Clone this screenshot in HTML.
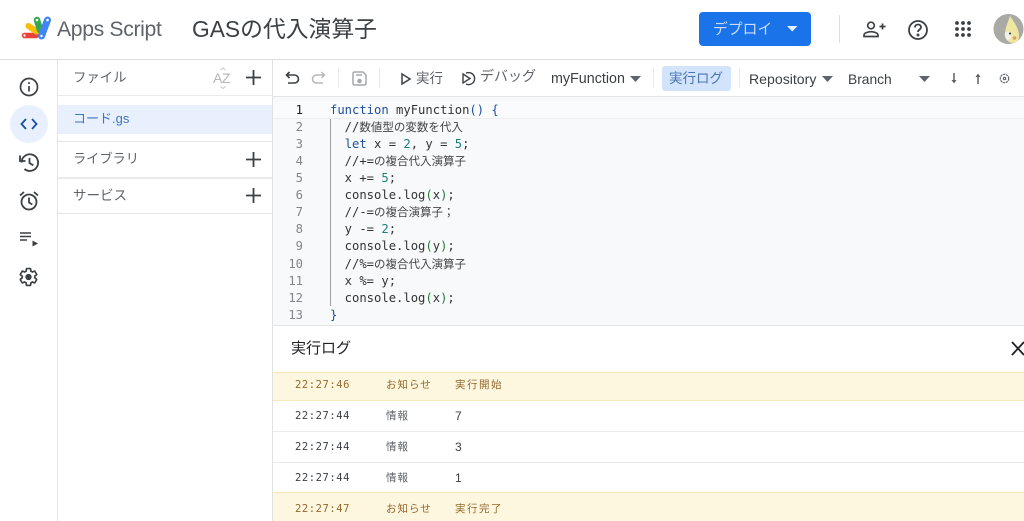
<!DOCTYPE html>
<html lang="ja"><head><meta charset="utf-8"><title>Apps Script</title>
<style>
html,body{margin:0;padding:0;background:#fff;}
body{width:1024px;height:521px;overflow:hidden;position:relative;font-family:"Liberation Sans","Noto Sans CJK JP",sans-serif;color:#3c4043;}
.a{position:absolute;white-space:nowrap;}
.ln{position:absolute;left:272px;width:31px;text-align:right;font:12.2px/17px "DejaVu Sans Mono",monospace;color:#80868b;}
.c{position:absolute;left:330px;font:12.2px/17px "DejaVu Sans Mono","Noto Sans CJK JP",monospace;color:#333;white-space:pre;}
.c i{font-style:normal;font-family:"Noto Sans CJK JP",sans-serif;font-size:11.5px;color:#444;}
.k{color:#1f4e9e}.n{color:#1f7f7f}.p{color:#2a7a3c}
.row{position:absolute;left:272px;width:752px;font:10.5px/14px "DejaVu Sans Mono","Noto Sans CJK JP",monospace;color:#3c4043;}
.row span{position:absolute;top:0;white-space:nowrap;}
.row .t{left:23px;letter-spacing:.55px}
.row .l{left:114px;font-family:"Noto Sans CJK JP",sans-serif;font-size:10.5px;letter-spacing:1px;color:#5f6368}
.row .m{left:183px;font-family:"Noto Sans CJK JP",sans-serif;font-size:10.5px;letter-spacing:1.5px}
.row .d{left:183px;font-family:"Liberation Sans",sans-serif;font-size:12px;}
.y,.y span{color:#96682c!important}
svg{position:absolute;overflow:visible}
.tb{font-size:14px;color:#3c4043;}
.jp{font-family:"Noto Sans CJK JP",sans-serif;}
</style></head><body>

<!-- header -->
<svg style="left:20px;top:15px" width="32" height="27" viewBox="0 0 32 27" fill="none" stroke-linecap="round">
<path d="M4.500 20.500H16" stroke="#ea4335" stroke-width="5.500"/>
<path d="M8.500 11L16.500 16.500" stroke="#fbbc04" stroke-width="6"/>
<path d="M17 5L20 15" stroke="#34a853" stroke-width="6.500"/>
<path d="M27.500 5L21.500 21" stroke="#4285f4" stroke-width="7"/>
<circle cx="17" cy="5" r="1.300" fill="#fff"/><circle cx="27.500" cy="5" r="1.300" fill="#fff"/>
<circle cx="4.500" cy="20.500" r="1.200" fill="#fff"/><circle cx="21.500" cy="21" r="1.200" fill="#fff"/>
</svg>
<div class="a" style="left:57px;top:17px;font-size:21.200px;line-height:26px;color:#5f6368;letter-spacing:-.35px">Apps Script</div>
<div class="a" style="left:192px;top:14px;font-size:22.800px;line-height:30px;color:#3c4043;font-family:'Liberation Sans','Noto Sans CJK JP',sans-serif;">GASの代入演算子</div>

<div class="a" style="left:699px;top:12px;width:112px;height:34px;background:#1a73e8;border-radius:4px"></div>
<div class="a jp" style="left:713px;top:19px;font-size:14.800px;line-height:19px;color:#c9defb;">デプロイ</div>
<svg style="left:787px;top:26px" width="11" height="6"><path d="M0 0H10.500L5.250 5.500Z" fill="#e8f0fe"/></svg>
<div class="a" style="left:839px;top:15px;width:1px;height:28px;background:#dadce0"></div>
<svg style="left:863px;top:21px" width="23" height="17" viewBox="0 0 23 17" fill="none" stroke="#3c4043" stroke-width="1.700">
<circle cx="8" cy="4.500" r="3.300"/><path d="M1 15.500v-1.500c0-2 4-3.300 7-3.300s7 1.300 7 3.300v1.500Z"/><path d="M16.500 5.500h6M19.500 2.500v6"/></svg>
<svg style="left:907px;top:19px" width="22" height="22" viewBox="0 0 22 22" fill="none" stroke="#3c4043" stroke-width="1.800">
<circle cx="11" cy="11" r="9"/><path d="M8 8.500c0-1.800 1.300-3 3-3s3 1.200 3 2.800c0 2.200-3 2.400-3 4.700"/><circle cx="11" cy="16" r=".6"/></svg>
<svg style="left:955px;top:21px" width="16" height="16" fill="#3c4043">
<circle cx="2" cy="2" r="1.900"/><circle cx="8" cy="2" r="1.900"/><circle cx="14" cy="2" r="1.900"/>
<circle cx="2" cy="8" r="1.900"/><circle cx="8" cy="8" r="1.900"/><circle cx="14" cy="8" r="1.900"/>
<circle cx="2" cy="14" r="1.900"/><circle cx="8" cy="14" r="1.900"/><circle cx="14" cy="14" r="1.900"/></svg>
<svg style="left:993px;top:14px" width="31" height="30" viewBox="0 0 31 30">
<circle cx="15.500" cy="15" r="15" fill="#a9a9a6"/>
<path d="M17 2C15 8 12 14 12 20c0 5 3 9 8 9 4 0 6-3 6-7C26 14 21 8 17 2Z" fill="#eee7a0"/>
<path d="M12 19c1-2 5-2 6 0 1 3-1 7-3 7s-4-4-3-7Z" fill="#f3f1e6"/>
<circle cx="17" cy="19.500" r="1" fill="#222"/><circle cx="21.500" cy="24" r="1.800" fill="#dc9a6e"/></svg>
<div class="a" style="left:0;top:59px;width:1024px;height:1px;background:#dadce0"></div>

<!-- left rail -->
<div class="a" style="left:57px;top:60px;width:1px;height:461px;background:#e3e4e6"></div>
<svg style="left:19px;top:77px" width="20" height="20" viewBox="0 0 20 20" fill="none" stroke="#3c4043" stroke-width="1.700">
<circle cx="10" cy="10" r="8.500"/><path d="M10 9v5.500"/><path d="M10 5.200v1.800"/></svg>
<div class="a" style="left:10px;top:105px;width:38px;height:38px;border-radius:50%;background:#e8f0fe"></div>
<svg style="left:20px;top:118px" width="18" height="12" viewBox="0 0 18 12" fill="none" stroke="#174ea6" stroke-width="1.800">
<path d="M6 1L1.500 6 6 11M12 1l4.500 5-4.500 5"/></svg>
<svg style="left:19px;top:153px" width="20" height="19" viewBox="0 0 20 19" fill="none" stroke="#3c4043" stroke-width="1.800">
<path d="M2.500 9.500A8.300 8.300 0 1 1 5.500 16"/><path d="M1 2.500V8h5.500"/><path d="M10.500 5v5l3.800 2.300"/></svg>
<svg style="left:19px;top:191px" width="20" height="20" viewBox="0 0 20 20" fill="none" stroke="#3c4043" stroke-width="1.800">
<circle cx="10" cy="11" r="7.500"/><path d="M10 6.500v5l3.300 2"/><path d="M1 4.500l4-3.500M19 4.500l-4-3.500"/></svg>
<svg style="left:20px;top:232px" width="19" height="15" viewBox="0 0 19 15" fill="none">
<path d="M0 1h11M0 4.500h11M0 8h7" stroke="#3c4043" stroke-width="1.400"/><path d="M12.500 8.500l5.500 3-5.500 3Z" fill="#3c4043"/></svg>
<svg style="left:18px;top:265.500px" width="21" height="22" viewBox="0 0 24 24">
<path fill="none" stroke="#3c4043" stroke-width="1.900" d="M19.140 12.940c.04-.3.06-.61.06-.94 0-.32-.02-.64-.07-.94l2.030-1.580c.18-.14.23-.41.12-.61l-1.920-3.320c-.12-.22-.37-.29-.59-.22l-2.390.96c-.5-.38-1.030-.7-1.620-.94l-.36-2.540c-.04-.24-.24-.41-.48-.41h-3.840c-.24 0-.43.17-.47.41l-.36 2.540c-.59.24-1.130.57-1.620.94l-2.390-.96c-.22-.08-.47 0-.59.22L2.740 8.870c-.12.21-.08.47.12.61l2.030 1.580c-.05.3-.09.63-.09.94s.02.64.07.94l-2.030 1.580c-.18.14-.23.41-.12.61l1.920 3.320c.12.22.37.29.59.22l2.390-.96c.5.38 1.030.7 1.620.94l.36 2.540c.05.24.24.41.48.41h3.840c.24 0 .44-.17.47-.41l.36-2.540c.59-.24 1.130-.56 1.620-.94l2.390.96c.22.08.47 0 .59-.22l1.920-3.320c.12-.22.07-.47-.12-.61l-2.010-1.580z"/><circle cx="12" cy="12" r="3.600" fill="#3c4043"/></svg>

<!-- file panel -->
<div class="a jp" style="left:73px;top:67px;font-size:13.400px;line-height:19px;color:#5f6368;">ファイル</div>
<div class="a" style="left:213px;top:70px;font-size:14px;line-height:16px;color:#b4b6b9;letter-spacing:-.5px">AZ</div>
<svg style="left:219px;top:68px" width="8" height="22"><path d="M1.500 2L4 0 6.500 2M1.500 18.500L4 20.500 6.500 18.500" fill="none" stroke="#c4c6c9" stroke-width="1"/></svg>
<svg style="left:246px;top:70px" width="15" height="15"><path d="M7.500 0v15M0 7.500h15" stroke="#3c4043" stroke-width="1.800"/></svg>
<div class="a" style="left:58px;top:95px;width:214px;height:1px;background:#e8eaed"></div>
<div class="a" style="left:58px;top:105px;width:214px;height:29px;background:#e8f0fe"></div>
<div class="a" style="left:73px;top:110px;font-size:13px;line-height:18px;color:#3f74c4;font-family:'Liberation Sans','Noto Sans CJK JP',sans-serif;">コード.gs</div>
<div class="a" style="left:58px;top:141px;width:214px;height:1px;background:#e3e4e6"></div>
<div class="a jp" style="left:73px;top:148px;font-size:13.200px;line-height:19px;color:#5f6368;">ライブラリ</div>
<svg style="left:246px;top:152px" width="15" height="15"><path d="M7.500 0v15M0 7.500h15" stroke="#3c4043" stroke-width="1.800"/></svg>
<div class="a" style="left:58px;top:177px;width:214px;height:2px;background:#e8eaed"></div>
<div class="a jp" style="left:73px;top:185px;font-size:13.500px;line-height:19px;color:#5f6368;">サービス</div>
<svg style="left:246px;top:188px" width="15" height="15"><path d="M7.500 0v15M0 7.500h15" stroke="#3c4043" stroke-width="1.800"/></svg>
<div class="a" style="left:58px;top:213px;width:214px;height:1px;background:#e3e4e6"></div>
<div class="a" style="left:272px;top:60px;width:1px;height:461px;background:#dfe1e3"></div>

<!-- toolbar -->
<svg style="left:285px;top:71px" width="15" height="14" viewBox="0 0 15 14" fill="none" stroke="#3c4043" stroke-width="1.600">
<path d="M4.500 1L1.500 4l3 3"/><path d="M2 4h7.500a4 4 0 0 1 0 8H3"/></svg>
<svg style="left:311px;top:71px" width="15" height="14" viewBox="0 0 15 14" fill="none" stroke="#b5b7ba" stroke-width="1.500">
<path d="M10.500 1l3 3-3 3"/><path d="M13 4H5.500a4 4 0 0 0 0 8H12"/></svg>
<div class="a" style="left:338px;top:68px;width:1px;height:20px;background:#e8eaed"></div>
<svg style="left:352px;top:71px" width="15" height="15" viewBox="0 0 15 15" fill="none" stroke="#a5a7aa" stroke-width="1.500">
<path d="M1 2.500A1.500 1.500 0 0 1 2.500 1H11l3 3v8.500a1.500 1.500 0 0 1-1.500 1.500h-10A1.500 1.500 0 0 1 1 12.500Z"/><path d="M4 4h6"/><circle cx="7.500" cy="10" r="1.500" fill="#a5a7aa"/></svg>
<div class="a" style="left:379px;top:68px;width:1px;height:20px;background:#e8eaed"></div>
<svg style="left:401px;top:73px" width="10" height="12" fill="none" stroke="#3c4043" stroke-width="1.500"><path d="M1 1l8 5-8 5Z"/></svg>
<div class="a jp" style="left:416px;top:68px;font-size:13.500px;line-height:18px;color:#5f6368;">実行</div>
<svg style="left:461px;top:71px" width="15" height="15" viewBox="0 0 15 15" fill="none" stroke="#3c4043" stroke-width="1.400">
<path d="M5 2.200A6 6 0 1 1 5 13"/><path d="M1 3l7 4.500-7 4.500Z" transform="translate(1 0)"/></svg>
<div class="a jp" style="left:480px;top:67px;font-size:14px;line-height:19px;color:#5f6368;">デバッグ</div>
<div class="a tb" style="left:551px;top:71px;font-size:14.300px;line-height:17px">myFunction</div>
<svg style="left:630px;top:76px" width="12" height="6"><path d="M0 0H11L5.500 6Z" fill="#5f6368"/></svg>
<div class="a" style="left:653px;top:68px;width:1px;height:20px;background:#e8eaed"></div>
<div class="a" style="left:662px;top:66px;width:69px;height:25px;background:#d2e3fc;border-radius:3px"></div>
<div class="a jp" style="left:669px;top:68px;font-size:13.500px;line-height:18px;color:#4a74b0;">実行ログ</div>
<div class="a" style="left:739px;top:68px;width:1px;height:20px;background:#e8eaed"></div>
<div class="a tb" style="left:749px;top:71px;line-height:17px;font-size:14.100px">Repository</div>
<svg style="left:822px;top:76px" width="12" height="6"><path d="M0 0H11L5.500 6Z" fill="#5f6368"/></svg>
<div class="a tb" style="left:848px;top:71px;line-height:17px;font-size:13.800px">Branch</div>
<svg style="left:919px;top:76px" width="12" height="6"><path d="M0 0H11L5.500 6Z" fill="#5f6368"/></svg>
<svg style="left:951px;top:73px" width="6" height="11" fill="none"><path d="M3 0v8" stroke="#5f6368" stroke-width="1.500"/><path d="M.5 7h5L3 10.500Z" fill="#5f6368"/></svg>
<svg style="left:975px;top:73px" width="6" height="11" fill="none"><path d="M3 3v8" stroke="#5f6368" stroke-width="1.500"/><path d="M.5 4h5L3 .5Z" fill="#5f6368"/></svg>
<svg style="left:999px;top:73px" width="11" height="11" fill="none" stroke="#5f6368" stroke-width="1.200"><circle cx="5.500" cy="5.500" r="4.200" stroke-dasharray="2.300 .7"/><circle cx="5.500" cy="5.500" r="1.200"/></svg>

<!-- editor -->
<div class="a" style="left:272px;top:96px;width:752px;height:1px;background:#e3e4e6"></div>
<div class="a" style="left:273px;top:97px;width:751px;height:228px;background:#f8f9fa"></div>
<div class="a" style="left:273px;top:101px;width:751px;height:17px;background:#fafbfc;border-bottom:1px solid #eceef0"></div>
<div class="a" style="left:330px;top:119px;width:1px;height:187px;background:#9aa0a6"></div>

<div class="ln" style="top:102px;color:#202124">1</div>
<div class="ln" style="top:119px">2</div>
<div class="ln" style="top:136px">3</div>
<div class="ln" style="top:153px">4</div>
<div class="ln" style="top:170px">5</div>
<div class="ln" style="top:187px">6</div>
<div class="ln" style="top:204px">7</div>
<div class="ln" style="top:221px">8</div>
<div class="ln" style="top:238px">9</div>
<div class="ln" style="top:255.500px">10</div>
<div class="ln" style="top:272.500px">11</div>
<div class="ln" style="top:289.500px">12</div>
<div class="ln" style="top:306.500px">13</div>

<div class="c" style="top:102px"><span class="k">function</span> myFunction<span class="k">() {</span></div>
<div class="c" style="top:119px">  //<i>数値型の変数を代入</i></div>
<div class="c" style="top:136px">  <span class="k">let</span> x = <span class="n">2</span>, y = <span class="n">5</span>;</div>
<div class="c" style="top:153px">  //+=<i>の複合代入演算子</i></div>
<div class="c" style="top:170px">  x += <span class="n">5</span>;</div>
<div class="c" style="top:187px">  console.log<span class="p">(</span>x<span class="p">)</span>;</div>
<div class="c" style="top:204px">  //-=<i>の複合演算子；</i></div>
<div class="c" style="top:221px">  y -= <span class="n">2</span>;</div>
<div class="c" style="top:238px">  console.log<span class="p">(</span>y<span class="p">)</span>;</div>
<div class="c" style="top:255.500px">  //%=<i>の複合代入演算子</i></div>
<div class="c" style="top:272.500px">  x %= y;</div>
<div class="c" style="top:289.500px">  console.log<span class="p">(</span>x<span class="p">)</span>;</div>
<div class="c" style="top:306.500px"><span class="k">}</span></div>

<!-- log panel -->
<div class="a" style="left:273px;top:325px;width:751px;height:196px;background:#fff;border-top:1px solid #e3e4e6;box-sizing:border-box"></div>
<div class="a jp" style="left:291px;top:338px;font-size:15px;line-height:20px;color:#202124;">実行ログ</div>
<svg style="left:1012px;top:342px" width="12" height="13"><path d="M0 0L12 13M12 0L0 13" stroke="#202124" stroke-width="1.800"/></svg>

<div class="a" style="left:273px;top:372px;width:751px;height:29px;background:#fef7e0;border-top:1px solid #f6e8bd;border-bottom:1px solid #f6e8bd;box-sizing:border-box"></div>
<div class="row y" style="top:378px"><span class="t">22:27:46</span><span class="l">お知らせ</span><span class="m">実行開始</span></div>
<div class="row" style="top:409px"><span class="t">22:27:44</span><span class="l">情報</span><span class="d">7</span></div>
<div class="a" style="left:273px;top:431px;width:751px;height:1px;background:#e8eaed"></div>
<div class="row" style="top:440px"><span class="t">22:27:44</span><span class="l">情報</span><span class="d">3</span></div>
<div class="a" style="left:273px;top:462px;width:751px;height:1px;background:#e8eaed"></div>
<div class="row" style="top:471px"><span class="t">22:27:44</span><span class="l">情報</span><span class="d">1</span></div>
<div class="a" style="left:273px;top:492px;width:751px;height:29px;background:#fef7e0;border-top:1px solid #f6e8bd;box-sizing:border-box"></div>
<div class="row y" style="top:502px"><span class="t">22:27:47</span><span class="l">お知らせ</span><span class="m">実行完了</span></div>

</body></html>
